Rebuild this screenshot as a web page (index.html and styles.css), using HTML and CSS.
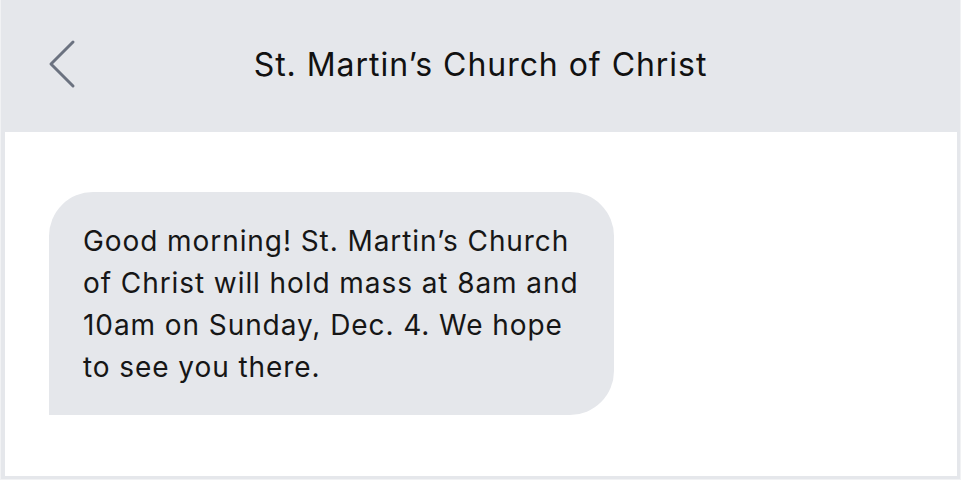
FILE: index.html
```html
<!DOCTYPE html>
<html lang="en">
<head>
<meta charset="utf-8">
<title>St. Martin’s Church of Christ</title>
<link rel="stylesheet" href="styles.css">
</head>
<body>
<div class="frame">
  <header class="topbar">
    <button class="back" aria-label="Back">
      <svg width="30" height="50" viewBox="0 0 30 50" fill="none">
        <path d="M25 3 L3 25 L25 47" stroke="#6b7280" stroke-width="3" stroke-linecap="round" stroke-linejoin="round"/>
      </svg>
    </button>
    <h1 class="title">St. Martin’s Church of Christ</h1>
  </header>
  <main class="thread">
    <div class="bubble">Good morning! St. Martin’s Church<br>of Christ will hold mass at 8am and<br>10am on Sunday, Dec. 4. We hope<br>to see you there.</div>
  </main>
</div>
</body>
</html>
```
FILE: styles.css
```css
* { box-sizing: border-box; }
html, body { margin: 0; padding: 0; }
body {
  width: 961px;
  height: 480px;
  background: #f1f2f4;
  font-family: Inter, "Noto Sans", "Liberation Sans", sans-serif;
  color: #111;
  overflow: hidden;
}
.frame {
  margin: 0 1px 1px 1px;
  height: 479px;
  background: #e5e7eb;
  display: flex;
  flex-direction: column;
  padding: 0 3px 3px 3px;
}
.topbar {
  height: 132px;
  flex: none;
  position: relative;
  display: flex;
  align-items: center;
  justify-content: center;
  margin: 0 -3px;
}
.back {
  position: absolute;
  left: 47px;
  top: 39px;
  padding: 0;
  border: 0;
  background: none;
  width: 30px;
  height: 50px;
}
.back svg { display: block; }
.title {
  margin: 0;
  font-size: 32px;
  font-weight: 400;
  color: #111;
  letter-spacing: 0.03em;
  line-height: 40px;
  padding-bottom: 2px;
}
.thread {
  flex: 1;
  background: #fff;
  padding: 60px 0 0 44px;
  margin-left: 1px;
}
.bubble {
  width: 565px;
  background: #e5e7eb;
  border-radius: 44px 44px 44px 0;
  padding: 28px 20px 27px 34px;
  font-size: 28px;
  line-height: 42px;
  letter-spacing: 0.033em;
  color: #161616;
  white-space: nowrap;
}
```
